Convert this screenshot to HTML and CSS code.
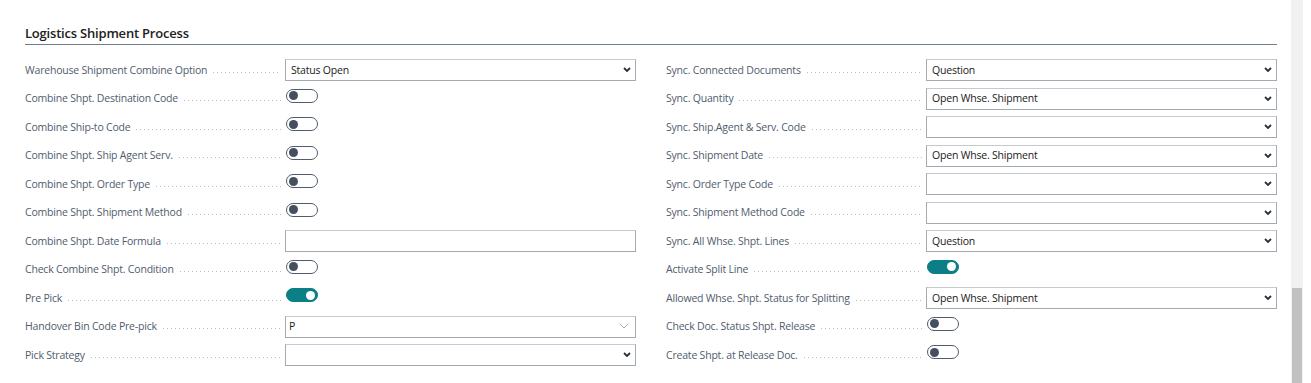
FILE: index.html
```html
<!DOCTYPE html>
<html lang="en">
<head>
<meta charset="utf-8">
<title>Logistics Shipment Process</title>
<link rel="stylesheet" href="styles.css">
</head>
<body>
<div class="page">
  <main class="content">
    <h2 class="section-title">Logistics Shipment Process</h2>
    <div class="columns">
      <div class="col">
        <div class="row"><div class="label"><span>Warehouse Shipment Combine Option</span></div><div class="field select"><span class="value">Status Open</span><svg class="chev" viewBox="0 0 8 5"><path d="M1 1 L4 4 L7 1"/></svg></div></div>
        <div class="row"><div class="label"><span>Combine Shpt. Destination Code</span></div><div class="toggle"><span class="knob"></span></div></div>
        <div class="row"><div class="label"><span>Combine Ship-to Code</span></div><div class="toggle"><span class="knob"></span></div></div>
        <div class="row"><div class="label"><span>Combine Shpt. Ship Agent Serv.</span></div><div class="toggle"><span class="knob"></span></div></div>
        <div class="row"><div class="label"><span>Combine Shpt. Order Type</span></div><div class="toggle"><span class="knob"></span></div></div>
        <div class="row"><div class="label"><span>Combine Shpt. Shipment Method</span></div><div class="toggle"><span class="knob"></span></div></div>
        <div class="row"><div class="label"><span>Combine Shpt. Date Formula</span></div><div class="field"></div></div>
        <div class="row"><div class="label"><span>Check Combine Shpt. Condition</span></div><div class="toggle"><span class="knob"></span></div></div>
        <div class="row"><div class="label"><span>Pre Pick</span></div><div class="toggle on"><span class="knob"></span></div></div>
        <div class="row"><div class="label"><span>Handover Bin Code Pre-pick</span></div><div class="field lookup"><span class="value">P</span><svg class="chev-light" viewBox="0 0 10 6"><path d="M0.5 0.5 L5 5 L9.5 0.5"/></svg></div></div>
        <div class="row"><div class="label"><span>Pick Strategy</span></div><div class="field select"><span class="value"></span><svg class="chev" viewBox="0 0 8 5"><path d="M1 1 L4 4 L7 1"/></svg></div></div>
      </div>
      <div class="col">
        <div class="row"><div class="label"><span>Sync. Connected Documents</span></div><div class="field select"><span class="value">Question</span><svg class="chev" viewBox="0 0 8 5"><path d="M1 1 L4 4 L7 1"/></svg></div></div>
        <div class="row"><div class="label"><span>Sync. Quantity</span></div><div class="field select"><span class="value">Open Whse. Shipment</span><svg class="chev" viewBox="0 0 8 5"><path d="M1 1 L4 4 L7 1"/></svg></div></div>
        <div class="row"><div class="label"><span>Sync. Ship.Agent &amp; Serv. Code</span></div><div class="field select"><span class="value"></span><svg class="chev" viewBox="0 0 8 5"><path d="M1 1 L4 4 L7 1"/></svg></div></div>
        <div class="row"><div class="label"><span>Sync. Shipment Date</span></div><div class="field select"><span class="value">Open Whse. Shipment</span><svg class="chev" viewBox="0 0 8 5"><path d="M1 1 L4 4 L7 1"/></svg></div></div>
        <div class="row"><div class="label"><span>Sync. Order Type Code</span></div><div class="field select"><span class="value"></span><svg class="chev" viewBox="0 0 8 5"><path d="M1 1 L4 4 L7 1"/></svg></div></div>
        <div class="row"><div class="label"><span>Sync. Shipment Method Code</span></div><div class="field select"><span class="value"></span><svg class="chev" viewBox="0 0 8 5"><path d="M1 1 L4 4 L7 1"/></svg></div></div>
        <div class="row"><div class="label"><span>Sync. All Whse. Shpt. Lines</span></div><div class="field select"><span class="value">Question</span><svg class="chev" viewBox="0 0 8 5"><path d="M1 1 L4 4 L7 1"/></svg></div></div>
        <div class="row"><div class="label"><span>Activate Split Line</span></div><div class="toggle on"><span class="knob"></span></div></div>
        <div class="row"><div class="label"><span>Allowed Whse. Shpt. Status for Splitting</span></div><div class="field select"><span class="value">Open Whse. Shipment</span><svg class="chev" viewBox="0 0 8 5"><path d="M1 1 L4 4 L7 1"/></svg></div></div>
        <div class="row"><div class="label"><span>Check Doc. Status Shpt. Release</span></div><div class="toggle"><span class="knob"></span></div></div>
        <div class="row"><div class="label"><span>Create Shpt. at Release Doc.</span></div><div class="toggle"><span class="knob"></span></div></div>
      </div>
    </div>
  </main>
  <div class="scrollbar"><div class="thumb"></div></div>
  <div class="edge"></div>
</div>
</body>
</html>
```
FILE: styles.css
```css
* { box-sizing: border-box; }
html, body { margin: 0; padding: 0; background: #fff; }
body {
  font-family: "Segoe UI", "Open Sans", "Noto Sans", sans-serif;
  color: #212121;
  height: 383px;
  overflow: hidden;
}
.page {
  display: flex;
  height: 383px;
}
.content {
  width: 1291px;
  padding: 24px 14px 0 25px;
}
.section-title {
  margin: 0;
  font-size: 13px;
  letter-spacing: -0.2px;
  line-height: 18px;
  font-weight: 600;
  color: #212121;
  padding-bottom: 2px;
  border-bottom: 1px solid #6f7e8a;
}
.columns {
  display: grid;
  grid-template-columns: 611px 611px;
  column-gap: 30px;
  margin-top: 14px;
}
.col {
  display: flex;
  flex-direction: column;
}
.row {
  display: flex;
  align-items: flex-start;
  height: 28.5px;
}
.label {
  width: 260px;
  height: 22px;
  flex: none;
  display: flex;
  align-items: center;
  padding-right: 4px;
  padding-bottom: 1px;
  font-size: 10.5px;
  letter-spacing: -0.2px;
  color: #505c6d;
  white-space: nowrap;
}
.label::after {
  content: "";
  flex: 1;
  height: 1px;
  margin: 5px 0 0 6px;
  align-self: center;
  background-image: linear-gradient(to right, #b9bec4 1px, transparent 1px);
  background-size: 4px 1px;
  background-repeat: repeat-x;
}
.field {
  width: 351px;
  height: 22px;
  flex: none;
  display: flex;
  align-items: center;
  border: 1px solid #a3aab2;
  border-top-color: #c6cacf;
  background: #fff;
  padding: 0 3px 1px 5px;
  font-size: 10.5px;
  letter-spacing: -0.2px;
  color: #212121;
}
.value {
  flex: 1;
  white-space: nowrap;
}
.chev {
  width: 8px;
  height: 5px;
  margin-right: 1px;
  fill: none;
  stroke: #2b2f36;
  stroke-width: 1.8;
}
.lookup { padding-left: 3px; }
.chev-light {
  width: 10px;
  height: 6px;
  margin-right: 3px;
  fill: none;
  stroke: #a6abb1;
  stroke-width: 1;
}
.toggle {
  width: 32px;
  height: 14px;
  margin: 1px 0 0 1px;
  border: 1px solid #505c6d;
  border-radius: 7px;
  background: #fff;
  display: flex;
  align-items: center;
  padding: 0 2px;
  flex: none;
}
.knob {
  width: 9px;
  height: 9px;
  border-radius: 50%;
  background: #454f5f;
}
.toggle.on {
  background: #0a7f86;
  border-color: #0a7f86;
  justify-content: flex-end;
}
.toggle.on .knob {
  background: #fff;
}
.scrollbar {
  width: 12px;
  flex: none;
  background: #f1f1f1;
  display: flex;
  flex-direction: column;
  justify-content: flex-end;
  padding: 0 1px;
}
.thumb {
  height: 95px;
  background: #c1c1c1;
}
.edge {
  width: 8px;
  flex: none;
  background: #fff;
}
```
